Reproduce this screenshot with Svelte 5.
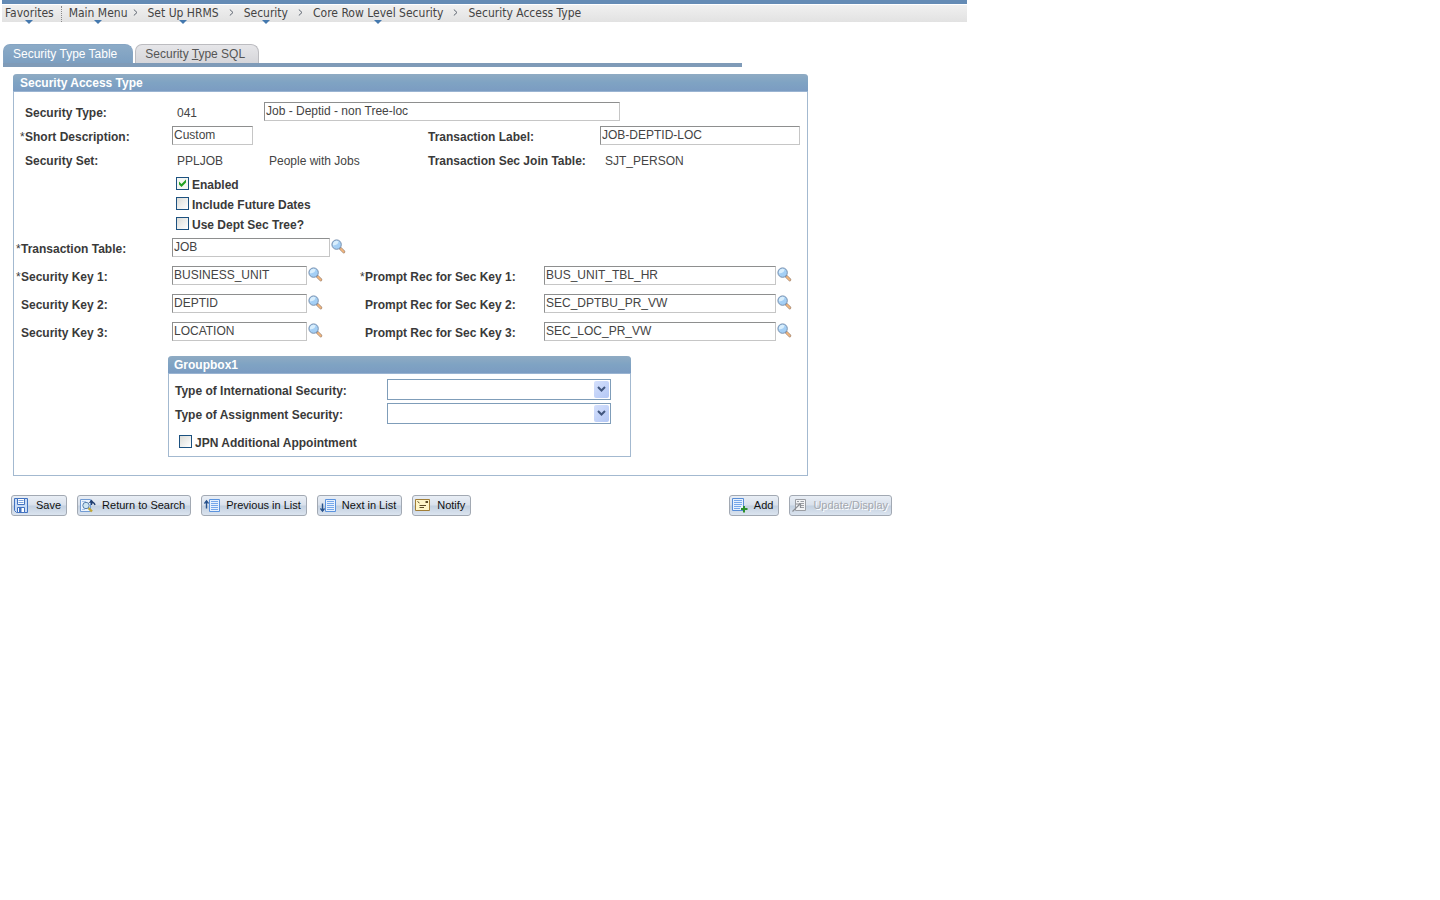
<script>
  const crumbs = [
    { text: 'Main Menu', menu: true },
    { text: 'Set Up HRMS', menu: true },
    { text: 'Security', menu: true },
    { text: 'Core Row Level Security', menu: true },
    { text: 'Security Access Type', menu: false },
  ];

  const keys = [
    { n: 1, required: true, key: 'BUSINESS_UNIT', prompt: 'BUS_UNIT_TBL_HR' },
    { n: 2, required: false, key: 'DEPTID', prompt: 'SEC_DPTBU_PR_VW' },
    { n: 3, required: false, key: 'LOCATION', prompt: 'SEC_LOC_PR_VW' },
  ];

  const flags = [
    { id: 'enabled', text: 'Enabled', on: true },
    { id: 'future', text: 'Include Future Dates', on: false },
    { id: 'tree', text: 'Use Dept Sec Tree?', on: false },
  ];

  const selects = [
    { id: 'intl', text: 'Type of International Security:' },
    { id: 'assign', text: 'Type of Assignment Security:' },
  ];

  const actions = [
    { icon: 'save', text: 'Save' },
    { icon: 'return', text: 'Return to Search' },
    { icon: 'prev', text: 'Previous in List' },
    { icon: 'next', text: 'Next in List' },
    { icon: 'notify', text: 'Notify' },
  ];
  const modes = [
    { icon: 'add', text: 'Add', disabled: false },
    { icon: 'update', text: 'Update/Display', disabled: true },
  ];
</script>

{#snippet lookup(name)}
  <button class="lookup" type="button" aria-label={'Look up ' + name}>
    <svg width="15" height="15" viewBox="0 0 15 15">
      <path d="M9.2 9.2 12.8 12.8" stroke="#9a8478" stroke-width="3" stroke-linecap="round" />
      <path d="M10 10 12.8 12.8" stroke="#f3b77d" stroke-width="1.8" stroke-linecap="round" />
      <circle cx="5.6" cy="5.6" r="4.7" fill="#a4cff5" stroke="#7890ae" />
      <path d="M2 6.5A3.8 3.8 0 0 1 7.5 2.2Q7.5 6 2 6.5Z" fill="#d9eefc" />
    </svg>
  </button>
{/snippet}

{#snippet icon(kind)}
  <svg width="16" height="15" viewBox="0 0 16 15" fill="none">
    {#if kind === 'save'}
      <path d="M.5 .5H13.5V14.5H2.5L.5 12.5Z" fill="#c9dcf6" stroke="#4272c0" />
      <path d="M3.5 .5H10.5V6.5H3.5Z" fill="#fff" stroke="#4272c0" />
      <path d="M4.5 2.5H9.5M4.5 4.5H9.5" stroke="#7da3dc" />
      <path d="M3.5 9.5H10.5V14.5H3.5Z" fill="#fff" stroke="#4272c0" />
      <path d="M5 10H7.5V14H5Z" fill="#4272c0" />
    {:else if kind === 'return'}
      <path d="M.5 1.5H10.5V13.5H.5Z" fill="#edf4fd" stroke="#729cd4" />
      <path d="M2 3.5H6M2 11.5H5" stroke="#a9c5ea" />
      <path d="M8.5 10 12 13.5" stroke="#c1a632" stroke-width="2.4" />
      <circle cx="6" cy="7.5" r="3.2" fill="#cde5f3" stroke="#587eab" />
      <path d="M15 7Q14.5 4.5 11.5 4V7" stroke="#233f70" stroke-width="1.3" />
      <path d="M8.7 5 11.5 1.5 13.5 4.2Z" fill="#233f70" />
    {:else if kind === 'prev' || kind === 'next'}
      <path d="M5.5 1.5H15.5V13.5H5.5Z" fill="#e7f1fd" stroke="#5b93de" />
      <path d="M7 3.5H14M7 5.5H14M7 7.5H14M7 9.5H14M7 11.5H14" stroke="#76a7ea" />
      {#if kind === 'prev'}
        <path d="M2.5 10.5V3" stroke="#27518b" stroke-width="1.4" />
        <path d="M.5 5.5 2.5 2.8 4.5 5.5" stroke="#27518b" stroke-width="1.3" />
      {:else}
        <path d="M2.5 5.5V13" stroke="#27518b" stroke-width="1.4" />
        <path d="M.5 10.5 2.5 13.2 4.5 10.5" stroke="#27518b" stroke-width="1.3" />
      {/if}
    {:else if kind === 'notify'}
      <path d="M.5 1.5H14.5V12.5H.5Z" fill="#fff6c8" stroke="#a07d37" />
      <path d="M2.5 3.5 4.5 5M10.5 3.5H13M10.5 4.5H13M4.5 7.5H11M4.5 9.5H9" stroke="#5c4a24" />
    {:else if kind === 'add'}
      <path d="M.5 .5H11.5V12.5H.5Z" fill="#e7f1fd" stroke="#5a8ed6" />
      <path d="M2 2.5H10M2 4.5H10M2 6.5H10M2 8.5H9M2 10.5H8" stroke="#76a7ea" />
      <path d="M12 8V14.5M9 11H15.5" stroke="#2c8f2c" stroke-width="2" />
    {:else}
      <path d="M3.5 1.5H13.5V12.5H3.5Z" fill="#f2f3f5" stroke="#9b9ea4" />
      <path d="M5 3.5H7M8.5 3.5H12M7 5.5H12M9 7.5H12M9 9.5H12" stroke="#9b9ea4" />
      <path d="M.5 13.5 7.5 6.5M4 6H8.5V10" stroke="#8b8e94" stroke-width="1.2" />
    {/if}
  </svg>
{/snippet}

<header>
  <nav aria-label="Breadcrumb">
    <a class="favorites menu" href="#favorites">Favorites</a>
    {#each crumbs as crumb, i}
      {#if i > 0}
        <svg class="sep" width="5" height="7" viewBox="0 0 5 7">
          <path d="M.8 .5 4 3.5 .8 6.5" fill="none" stroke="#5c6470" />
        </svg>
      {/if}
      <a class:menu={crumb.menu} href="#crumb{i}">{crumb.text}</a>
    {/each}
  </nav>
</header>

<main>
  <div class="tabs">
    <a class="tab active" href="#table">Security Type Table</a>
    <a class="tab" href="#sql">Security <u>T</u>ype SQL</a>
  </div>

  <section class="panel">
    <h1>Security Access Type</h1>

    <div class="summary">
      <label for="descr"><i></i>Security Type:</label>
      <span class="value">041</span>
      <input id="descr" class="descr" value="Job - Deptid - non Tree-loc" />

      <label for="short"><i>*</i>Short Description:</label>
      <div class="pair"><input id="short" class="short" value="Custom" /></div>
      <label class="second" for="tlabel">Transaction Label:</label>
      <input id="tlabel" class="tlabel" value="JOB-DEPTID-LOC" />

      <span class="label"><i></i>Security Set:</span>
      <span class="value">PPLJOB</span>
      <span class="value">People with Jobs</span>
      <span class="label second">Transaction Sec Join Table:</span>
      <span class="value">SJT_PERSON</span>
    </div>

    <div class="flags">
      {#each flags as flag}
        <div class="check">
          <input type="checkbox" id={flag.id} checked={flag.on} />
          <label for={flag.id}>{flag.text}</label>
        </div>
      {/each}
    </div>

    <div class="record">
      <label for="ttable"><i>*</i>Transaction Table:</label>
      <div class="field"><input id="ttable" class="ttable" value="JOB" />{@render lookup('Transaction Table')}</div>
    </div>

    <div class="keys">
      {#each keys as row}
        <label for="key{row.n}"><i>{row.required ? '*' : ''}</i>Security Key {row.n}:</label>
        <div class="field"><input id="key{row.n}" class="key" value={row.key} />{@render lookup('Security Key ' + row.n)}</div>
        <label class="prompt-label" for="prompt{row.n}"><i>{row.required ? '*' : ''}</i>Prompt Rec for Sec Key {row.n}:</label>
        <div class="field"><input id="prompt{row.n}" class="prompt" value={row.prompt} />{@render lookup('Prompt Rec ' + row.n)}</div>
      {/each}
    </div>

    <section class="group">
      <h2>Groupbox1</h2>
      <div class="choices">
        {#each selects as s}
          <label for={s.id}>{s.text}</label>
          <div class="select">
            <select id={s.id}><option value=""></option></select>
            <span class="arrow">
              <svg width="9" height="6" viewBox="0 0 9 6"><path d="M1 1 4.5 4.5 8 1" fill="none" stroke="#42577f" stroke-width="2" /></svg>
            </span>
          </div>
        {/each}
      </div>
      <div class="check">
        <input type="checkbox" id="jpn" />
        <label for="jpn">JPN Additional Appointment</label>
      </div>
    </section>
  </section>

  <div class="toolbar">
    {#each actions as a}
      <button class="action" type="button">{@render icon(a.icon)}{a.text}</button>
    {/each}
    <div class="modes">
      {#each modes as m}
        <button class="action" type="button" disabled={m.disabled}>{@render icon(m.icon)}{m.text}</button>
      {/each}
    </div>
  </div>
</main>

<style>
  :global(body) {
    background: #fff;
    color: #3a3a3a;
    font: 12px/16px "Liberation Sans", Arial, sans-serif;
  }
  header {
    max-width: 965px;
    margin-left: 2px;
    border-top: 4px solid #648bb5;
    box-sizing: border-box;
  }
  nav {
    display: flex;
    align-items: center;
    box-sizing: border-box;
    height: 17px;
    margin-top: 1px;
    padding: 0 0 2px 3px;
    background: linear-gradient(#f0f0f0, #e2e2e2);
    font: 12px/16px "DejaVu Sans Condensed", Tahoma, sans-serif;
    white-space: nowrap;
  }
  nav a {
    position: relative;
    color: #444;
    text-decoration: none;
  }
  .menu::after {
    content: "";
    position: absolute;
    left: calc(50% - 4px);
    top: 15px;
    border: 4px solid transparent;
    border-top-color: #4478ae;
    border-bottom: 0;
  }
  .favorites {
    margin-right: 15px;
  }
  .favorites::before {
    content: "";
    position: absolute;
    right: -8px;
    top: 1px;
    height: 16px;
    border-right: 1px dotted #888;
  }
  .sep {
    margin: 0 10px;
  }
  .favorites + a + .sep {
    margin-left: 5px;
  }

  .tabs {
    display: flex;
    gap: 2px;
    max-width: 739px;
    margin: 22px 0 0 3px;
    border-bottom: 4px solid #7f9bb8;
  }
  .tab {
    box-sizing: border-box;
    height: 19px;
    padding: 1px 13px 0 9px;
    border: 1px solid #bcbcc0;
    border-bottom: 0;
    border-radius: 7px 8px 0 0;
    background: linear-gradient(#e6e6e9, #d6d6da);
    color: #555;
    text-decoration: none;
  }
  .tab.active {
    padding-right: 15px;
    border-color: #86a5c3;
    background: linear-gradient(#8cabc7, #7c9fc1);
    color: #fff;
  }

  .panel,
  .group {
    border: 1px solid #a3b9d0;
    border-top: 0;
    border-radius: 4px 4px 0 0;
    box-sizing: border-box;
  }
  .panel {
    max-width: 795px;
    margin: 7px 0 0 13px;
    padding-bottom: 18px;
  }
  h1,
  h2 {
    margin: 0 -1px;
    height: 17px;
    padding-left: 7px;
    border-bottom: 1px solid #9ab4d2;
    border-radius: 4px 4px 0 0;
    background: linear-gradient(#8fabc3, #7fa3c3 50%, #7b9cc2);
    color: #fff;
    font: bold 12px/18px "Liberation Sans", Arial, sans-serif;
  }
  h2 {
    padding-left: 6px;
  }

  label,
  .label {
    font-weight: bold;
    padding-top: 3px;
    white-space: nowrap;
  }
  i {
    display: inline-block;
    width: 5px;
    font-style: normal;
    font-weight: normal;
  }
  input:not([type]),
  select {
    box-sizing: border-box;
    height: 19px;
    margin: 0;
    padding: 0 1px;
    border: 1px solid #c6c6c6;
    border-top-color: #8e8f8f;
    border-left-color: #8e8f8f;
    border-radius: 0;
    background: #fff;
    color: #444;
    font: 12px/16px "Liberation Sans", Arial, sans-serif;
  }
  .summary,
  .record,
  .keys {
    display: grid;
    align-items: center;
  }
  .summary {
    grid-template-columns: 158px 92px 164px 172px 1fr;
    grid-auto-rows: 24px;
    padding-top: 7px;
  }
  .summary label:not(.second),
  .summary .label:not(.second) {
    padding-left: 6px;
  }
  .value {
    padding: 4px 0 0 5px;
    color: #444;
  }
  .descr {
    grid-column: 3 / -1;
    width: 356px;
  }
  .pair {
    display: flex;
    grid-column: 2 / span 2;
  }
  .short {
    width: 81px;
  }
  .tlabel {
    width: 200px;
  }

  .flags {
    padding: 2px 0 2px 162px;
  }
  .check {
    display: flex;
    align-items: center;
    gap: 3px;
    height: 20px;
  }
  .check input {
    appearance: none;
    box-sizing: border-box;
    width: 13px;
    height: 13px;
    margin: 0;
    border: 1px solid #1c5180;
    background: linear-gradient(135deg, #dcdcd7, #fff);
  }
  .check input:checked {
    background: url("data:image/svg+xml,%3Csvg xmlns='http://www.w3.org/2000/svg' viewBox='0 0 11 11'%3E%3Cpath d='M2 3.5V6.5L4.5 9 9 4.5V1.5L4.5 6Z' fill='%2321a121'/%3E%3C/svg%3E") #f4f6f2;
  }

  .record,
  .keys {
    grid-template-columns: 158px 188px 184px 1fr;
    grid-auto-rows: 24px;
  }
  .keys {
    grid-auto-rows: 28px;
    margin-top: 2px;
  }
  .record label,
  .keys label:not(.prompt-label) {
    padding-left: 2px;
  }
  .field {
    display: flex;
    align-items: center;
    gap: 1px;
  }
  .ttable {
    width: 158px;
  }
  .key {
    width: 135px;
  }
  .prompt {
    width: 232px;
  }
  .lookup {
    display: flex;
    padding: 0 0 1px;
    border: 0;
    background: none;
  }

  .group {
    max-width: 463px;
    margin: 11px 0 0 154px;
    padding-bottom: 5px;
  }
  .choices {
    display: grid;
    grid-template-columns: 212px 224px;
    grid-auto-rows: 24px;
    align-items: center;
    padding: 3px 0 6px 6px;
  }
  .select {
    position: relative;
    display: flex;
  }
  select {
    appearance: none;
    width: 100%;
    height: 21px;
    border-color: #7f9db9;
  }
  .arrow {
    position: absolute;
    top: 2px;
    right: 2px;
    bottom: 2px;
    width: 15px;
    display: flex;
    align-items: center;
    justify-content: center;
    border-radius: 2px;
    background: linear-gradient(135deg, #d5e0fc, #b3c7f5);
    pointer-events: none;
  }
  .group .check {
    padding-left: 10px;
  }

  .toolbar {
    display: flex;
    flex-wrap: wrap;
    gap: 10px;
    max-width: 881px;
    margin: 19px 0 0 11px;
  }
  .modes {
    display: flex;
    gap: 10px;
    margin-left: auto;
  }
  .action {
    display: flex;
    align-items: center;
    gap: 6px;
    box-sizing: border-box;
    height: 21px;
    padding: 0 5px 1px 2px;
    border: 1px solid #a2a9b3;
    border-radius: 3px;
    background: linear-gradient(#e9eef5, #d9e1ec 48%, #c3d0e0 52%, #dbe4ef);
    color: #111;
    font: 11px/16px "Liberation Sans", Arial, sans-serif;
    white-space: nowrap;
  }
  .action:disabled {
    gap: 5px;
    padding-right: 3px;
    color: #a5a8ae;
    text-shadow: 1px 1px #fff;
  }
</style>
